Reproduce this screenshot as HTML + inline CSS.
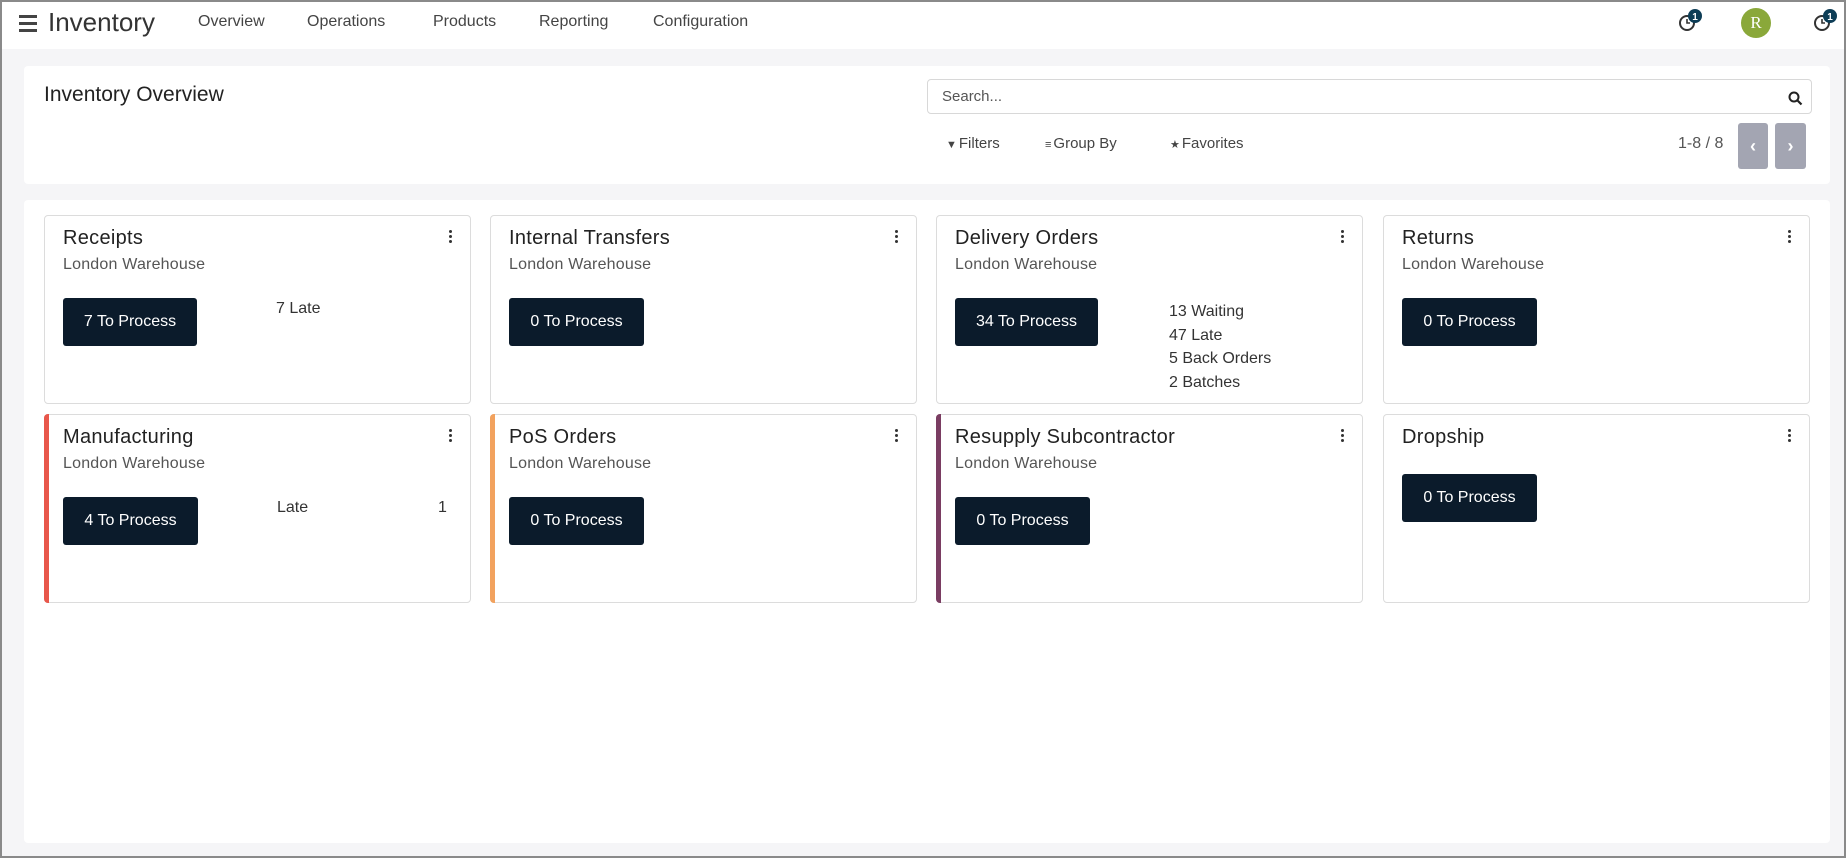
<!DOCTYPE html>
<html><head><meta charset="utf-8"><style>
*{box-sizing:border-box;margin:0;padding:0}
body{width:1846px;height:858px;overflow:hidden;font-family:"Liberation Sans",sans-serif;color:#222;background:#fff}
.frame{position:absolute;left:0;top:0;width:1846px;height:858px;border:2px solid #8a8a8a;background:#f5f5f7}
.nav{position:absolute;left:0;top:0;width:1842px;height:47px;background:#fff}
.abs{position:absolute;white-space:nowrap}
.navl{font-size:16px;color:#444;top:11px}
.panel{position:absolute;background:#fff;border-radius:4px}
.card{position:absolute;width:427px;height:189px;background:#fff;border:1px solid #dcdcdc;border-radius:4px}
.card h3{position:absolute;left:18px;top:11px;font-weight:normal;font-size:20px;color:#222;letter-spacing:.3px}
.card .sub{position:absolute;left:18px;top:40px;font-size:16px;color:#555;letter-spacing:.2px}
.btn{position:absolute;left:18px;height:48px;background:#0b1b2b;color:#fff;font-size:16px;border-radius:3px;display:flex;align-items:center;justify-content:center}
.kb{position:absolute;right:18px;top:14px;width:3px}
.kb i{display:block;width:3px;height:3px;background:#333;border-radius:50%;margin-bottom:2px}
.st{position:absolute;font-size:16px;color:#333}
.bar{position:absolute;left:-1px;top:-1px;bottom:-1px;width:5px;border-radius:4px 0 0 4px}
.fi{font-size:15px;color:#444;top:69px}
.fi small{font-size:11px;margin-right:2px}
</style></head><body>
<div class="frame">
<div class="nav">
 <div class="abs" style="left:17px;top:13px;width:18px">
  <div style="height:3px;background:#444;margin-bottom:4px"></div><div style="height:3px;background:#444;margin-bottom:4px"></div><div style="height:3px;background:#444"></div></div>
 <div class="abs" style="left:46px;top:5px;font-size:26px;color:#333">Inventory</div>
 <div class="abs navl" style="left:196px">Overview</div>
 <div class="abs navl" style="left:305px">Operations</div>
 <div class="abs navl" style="left:431px">Products</div>
 <div class="abs navl" style="left:537px">Reporting</div>
 <div class="abs navl" style="left:651px">Configuration</div>
 <svg class="abs" style="left:1676px;top:6px" width="28" height="28" viewBox="0 0 28 28"><circle cx="9" cy="15" r="7" fill="none" stroke="#333" stroke-width="2"/><path d="M9 11v4h3" stroke="#333" stroke-width="1.6" fill="none"/><circle cx="17" cy="8" r="7" fill="#0d3d56"/><text x="17" y="12" font-size="10" fill="#fff" text-anchor="middle" font-family="Liberation Sans" font-weight="bold">1</text></svg>
 <div class="abs" style="left:1739px;top:6px;width:30px;height:30px;border-radius:50%;background:#8aa83a;color:#fff;font-family:'Liberation Serif',serif;font-size:17px;text-align:center;line-height:30px">R</div>
 <svg class="abs" style="left:1811px;top:6px" width="28" height="28" viewBox="0 0 28 28"><circle cx="9" cy="15" r="7" fill="none" stroke="#333" stroke-width="2"/><path d="M9 11v4h3" stroke="#333" stroke-width="1.6" fill="none"/><circle cx="17" cy="8" r="7" fill="#0d3d56"/><text x="17" y="12" font-size="10" fill="#fff" text-anchor="middle" font-family="Liberation Sans" font-weight="bold">1</text></svg>
</div>

<div class="panel" style="left:22px;top:64px;width:1806px;height:118px">
 <div class="abs" style="left:20px;top:17px;font-size:21px;color:#222">Inventory Overview</div>
 <div class="abs" style="left:903px;top:13px;width:885px;height:35px;border:1px solid #d8d8d8;border-radius:4px">
  <span class="abs" style="left:14px;top:8px;font-size:15px;color:#555">Search...</span>
  <svg class="abs" style="right:8px;top:11px" width="15" height="15" viewBox="0 0 15 15"><circle cx="6" cy="6" r="4.5" fill="none" stroke="#222" stroke-width="2"/><path d="M9.5 9.5l4 4" stroke="#222" stroke-width="2.2"/></svg>
 </div>
 <div class="abs fi" style="left:922px"><small>▼</small>Filters</div>
 <div class="abs fi" style="left:1021px"><small>≡</small>Group By</div>
 <div class="abs fi" style="left:1146px"><small>★</small>Favorites</div>
 <div class="abs" style="left:1654px;top:69px;font-size:16px;color:#555">1-8 / 8</div>
 <div class="abs" style="left:1714px;top:57px;width:30px;height:46px;background:#a3a5b2;border-radius:3px;color:#fff;font-size:18px;text-align:center;line-height:46px;font-weight:bold">‹</div>
 <div class="abs" style="left:1751px;top:57px;width:31px;height:46px;background:#a3a5b2;border-radius:3px;color:#fff;font-size:18px;text-align:center;line-height:46px;font-weight:bold">›</div>
</div>

<div class="panel" style="left:22px;top:198px;width:1806px;height:643px"></div>

<div class="card" style="left:42px;top:213px"><h3>Receipts</h3><div class="sub">London Warehouse</div><div class="kb"><i></i><i></i><i></i></div>
 <div class="btn" style="top:82px;width:134px">7 To Process</div><div class="st" style="left:231px;top:84px">7 Late</div></div>
<div class="card" style="left:488px;top:213px"><h3>Internal Transfers</h3><div class="sub">London Warehouse</div><div class="kb"><i></i><i></i><i></i></div>
 <div class="btn" style="top:82px;width:135px">0 To Process</div></div>
<div class="card" style="left:934px;top:213px"><h3>Delivery Orders</h3><div class="sub">London Warehouse</div><div class="kb"><i></i><i></i><i></i></div>
 <div class="btn" style="top:82px;width:143px">34 To Process</div>
 <div class="st" style="left:232px;top:84px;line-height:23.5px">13 Waiting<br>47 Late<br>5 Back Orders<br>2 Batches</div></div>
<div class="card" style="left:1381px;top:213px"><h3>Returns</h3><div class="sub">London Warehouse</div><div class="kb"><i></i><i></i><i></i></div>
 <div class="btn" style="top:82px;width:135px">0 To Process</div></div>

<div class="card" style="left:42px;top:412px"><div class="bar" style="background:#e8574b"></div><h3>Manufacturing</h3><div class="sub">London Warehouse</div><div class="kb"><i></i><i></i><i></i></div>
 <div class="btn" style="top:82px;width:135px">4 To Process</div><div class="st" style="left:232px;top:84px">Late</div><div class="st" style="left:393px;top:84px">1</div></div>
<div class="card" style="left:488px;top:412px"><div class="bar" style="background:#f2a25e"></div><h3>PoS Orders</h3><div class="sub">London Warehouse</div><div class="kb"><i></i><i></i><i></i></div>
 <div class="btn" style="top:82px;width:135px">0 To Process</div></div>
<div class="card" style="left:934px;top:412px"><div class="bar" style="background:#7a3d62"></div><h3>Resupply Subcontractor</h3><div class="sub">London Warehouse</div><div class="kb"><i></i><i></i><i></i></div>
 <div class="btn" style="top:82px;width:135px">0 To Process</div></div>
<div class="card" style="left:1381px;top:412px"><h3>Dropship</h3><div class="kb"><i></i><i></i><i></i></div>
 <div class="btn" style="top:59px;width:135px">0 To Process</div></div>
</div>
</body></html>
